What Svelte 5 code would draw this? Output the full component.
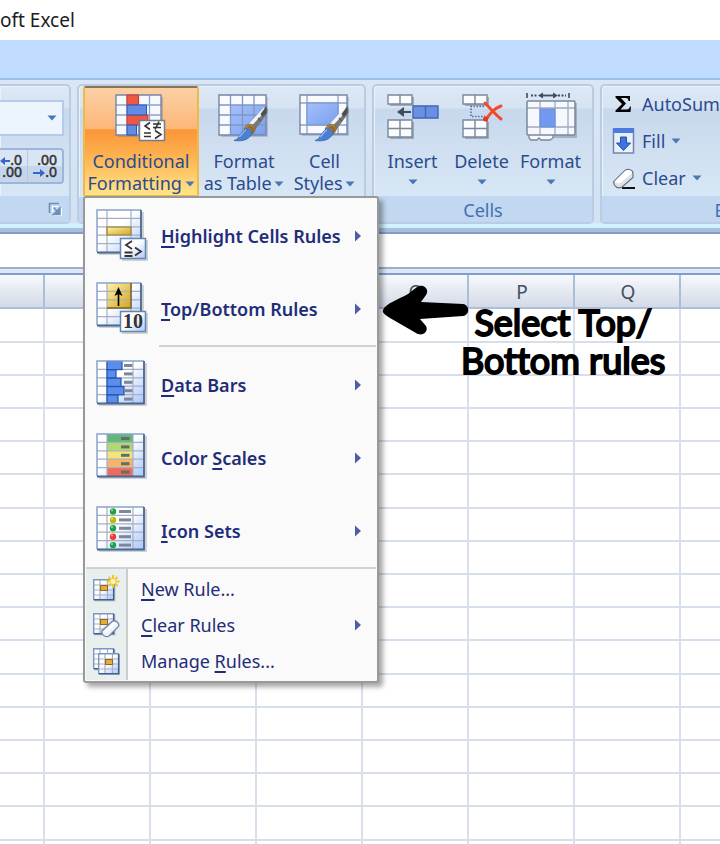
<script lang="ts">
	const columns = ['', '', '', '', 'O', 'P', 'Q', ''];
	const rows = Array.from({ length: 17 }, (_, i) => i + 1);

	const rules = [
		{ icon: 'highlight', before: '', key: 'H', after: 'ighlight Cells Rules' },
		{ icon: 'top', before: '', key: 'T', after: 'op/Bottom Rules' },
		{ icon: 'bars', before: '', key: 'D', after: 'ata Bars' },
		{ icon: 'scales', before: 'Color ', key: 'S', after: 'cales' },
		{ icon: 'sets', before: '', key: 'I', after: 'con Sets' }
	];

	const actions = [
		{ icon: 'new', before: '', key: 'N', after: 'ew Rule...', sub: false },
		{ icon: 'clear', before: '', key: 'C', after: 'lear Rules', sub: true },
		{ icon: 'manage', before: 'Manage ', key: 'R', after: 'ules...', sub: false }
	];

	const barWidths = [15, 9, 14, 17, 11];
	const scaleColors = ['#63b878', '#b0d873', '#f3e578', '#fbb26a', '#ee6a5c'];
	const dotColors = ['#1da345', '#c3b900', '#1da345', '#ee3b24', '#1da345'];

	let format = 'general';
</script>

{#snippet caret()}
	<svg class="caret" width="10" height="6" viewBox="0 0 10 6" aria-hidden="true">
		<path d="M0.5 0.5h9L5 5.5z" fill="#4a78b5" />
	</svg>
{/snippet}

{#snippet brush()}
	<path d="M48 13c2 1 2 5 1 7L37 36l-7-6z" fill="#77797c" />
	<path d="M47 15L32 31" stroke="#f3f3f3" stroke-width="3.500" />
	<path d="M48.500 12v7l-4 4-2-3z" fill="#4b4e52" />
	<path d="M40 24l3 3" stroke="#55585c" stroke-width="1.300" />
	<path d="M26 35c2-4 6-6 9-4s3 6-1 9z" fill="#b38a45" stroke="#7b5a2b" stroke-width=".8" />
	<path d="M16 46.500c6-1 6-10 13-12 4 1 6 4 4 7-4 5-10 6-17 5z" fill="#4b7fd1" stroke="#3763af" stroke-width=".8" />
	<path d="M28 34c3-1 7 2 6 6l2-2c1-4-2-7-5-6z" fill="#8f6a34" />
	<path d="M21 43c3-2 4-6 7-7" fill="none" stroke="#8db3ee" stroke-width="1.500" />
{/snippet}

{#snippet ruleIcon(name: string)}
	{@const badge = name === 'highlight' || name === 'top'}
	{@const right = badge ? 45 : 48}
	{@const split = badge ? 35 : 37}
	<svg class="rule-icon" width="54" height="54" viewBox={badge ? '0 1 54 54' : '0 -1 54 54'} aria-hidden="true">
		<rect x="3" y="4" width={right} height="43" fill="#68748a" opacity=".3" />
		<rect x="1" y="2" width={right - 1} height="42" fill="url(#cell)" />
		{#if name === 'highlight'}
			<rect x="11" y="19" width="24" height="8" fill="url(#gold)" />
		{:else if name === 'top'}
			<rect x="11" y="2" width="24" height="25" fill="url(#gold)" />
		{:else if name === 'scales'}
			{#each scaleColors as color, i}
				<rect x="11" y={2 + i * 8.4} width="26" height="8.400" fill={color} />
			{/each}
		{/if}
		<path d="M11 2v42M{split} 2v42M1 10.400h{right - 1}M1 18.800h{right - 1}M1 27.200h{right - 1}M1 35.600h{right - 1}" stroke="#a6afc2" stroke-width="1.200" fill="none" />
		{#if name === 'bars'}
			{#each barWidths as width, i}
				<rect x="11" y={2.4 + i * 8.4} {width} height="8.200" fill="#5b8eea" stroke="#2553b4" stroke-width="1.200" />
			{/each}
		{/if}
		{#if !badge}
			{#each barWidths as _, i}
				<rect x={name === 'sets' ? 23 : name === 'bars' ? 28 : 25} y={5 + i * 8.4} width={name === 'sets' ? 12 : 8.5} height="3" fill={name === 'scales' ? '#61705f' : '#7e8799'} />
			{/each}
		{/if}
		{#if name === 'sets'}
			{#each dotColors as color, i}
				<circle cx="17" cy={6.5 + i * 8.4} r="3.200" fill={color} />
				<circle cx="16" cy={5.3 + i * 8.4} r="1" fill="#fff" opacity=".6" />
			{/each}
		{/if}
		<path d="M1 44V2h{right - 1}" fill="none" stroke="#89a4cb" stroke-width="1.500" />
		<path d="M{right} 2v42.500H1" fill="none" stroke="#4a678e" stroke-width="1.800" />
		{#if name === 'highlight'}
			<path d="M11 19h24v8H11z" fill="none" stroke="#9d842c" stroke-width="1.200" />
		{:else if name === 'top'}
			<path d="M35 2v25H11" fill="none" stroke="#79641d" stroke-width="1.500" />
			<path d="M22.500 25V9" stroke="#000" stroke-width="1.600" />
			<path d="M22.500 6l4 9-4-2-4 2z" fill="#000" />
		{/if}
		{#if badge}
			<rect x="26" y="32" width="26" height="21" fill="#68748a" opacity=".3" />
			<rect x="24.500" y="30.500" width="25" height="20" fill="url(#cell)" stroke="#6587ae" stroke-width="1.500" />
			{#if name === 'highlight'}
				<path d="M36 33l-6 4 6 4M28.500 44.500h8M28.500 48h8M39 39.500l6 4-6 4" fill="none" stroke="#333" stroke-width="1.800" />
			{:else}
				<text x="37" y="47" text-anchor="middle" class="ten">10</text>
			{/if}
		{/if}
	</svg>
{/snippet}

{#snippet miniGrid(x: number, y: number)}
	<g transform="translate({x} {y})">
		<rect x="1.500" y="1.500" width="21" height="21" fill="#68748a" opacity=".3" />
		<rect x=".7" y=".7" width="20" height="20" fill="url(#cell)" />
		<path d="M7 1v20M14.500 1v20M1 6h20M1 11h20M1 16h20" stroke="#a3b0c8" stroke-width="1.200" />
		<path d="M.7 20.700V.7h20" fill="none" stroke="#7b97c0" stroke-width="1.400" />
		<path d="M20.700.7v20H.7" fill="none" stroke="#3f5f8d" stroke-width="1.500" />
		<rect x="7.500" y="6.500" width="7" height="5" fill="#e9ac32" stroke="#8a6a2d" />
	</g>
{/snippet}

{#snippet actionIcon(name: string)}
	<svg class="action-icon" width="28" height="28" viewBox="0 0 28 28" aria-hidden="true">
		{#if name === 'new'}
			{@render miniGrid(1, 4)}
			<path d="M21 0v13M14.500 6.500h13M16.500 2l9 9M25.500 2l-9 9" stroke="#f5c62f" stroke-width="2" />
			<circle cx="21" cy="6.500" r="2.500" fill="#fff7bd" />
		{:else if name === 'clear'}
			{@render miniGrid(1, 2)}
			<path d="M10 20L20 10.500c3-2 8 1 6.500 5L17 25c-3 2-8-1-7-5z" fill="#edf1fa" stroke="#7184a8" stroke-width="1.300" />
			<path d="M13 21l10-9" stroke="#fff" stroke-width="2.500" />
		{:else}
			{@render miniGrid(1, 1)}
			{@render miniGrid(6, 6)}
		{/if}
	</svg>
{/snippet}

<svg class="defs" width="0" height="0" aria-hidden="true">
	<defs>
		<linearGradient id="cell" x1="0" y1="0" x2="1" y2="1">
			<stop offset=".45" stop-color="#fff" />
			<stop offset="1" stop-color="#a9c6fb" />
		</linearGradient>
		<linearGradient id="gold" x1="0" y1="0" x2="1" y2="1">
			<stop offset="0" stop-color="#fff3a4" />
			<stop offset="1" stop-color="#d3a31f" />
		</linearGradient>
		<linearGradient id="blue" x1="0" y1="0" x2="1" y2="1">
			<stop offset="0" stop-color="#a5c1fa" />
			<stop offset="1" stop-color="#7b9ff0" />
		</linearGradient>
	</defs>
</svg>

<div class="window">
	<header class="title">oft Excel</header>
	<div class="tabs"></div>

	<div class="ribbon">
		<section class="group number">
			<div class="group-body">
				<div class="format-box">
					<select aria-label="Number format" bind:value={format}>
						<option value="general"></option>
					</select>
					{@render caret()}
				</div>
				<div class="decimals">
					<button aria-label="Increase decimal">
						<span><svg width="10" height="8" viewBox="0 0 10 8"><path d="M0 4l5-4v3h5v2H5v3z" fill="#3565c9" /></svg>.0</span>
						<span>.00</span>
					</button>
					<button aria-label="Decrease decimal">
						<span>.00</span>
						<span><svg width="12" height="8" viewBox="0 0 12 8"><path d="M12 4L7 0v3H0v2h7v3z" fill="#3565c9" /></svg>.0</span>
					</button>
				</div>
			</div>
			<footer>
				<svg class="launcher" width="14" height="14" viewBox="0 0 14 14" aria-hidden="true">
					<path d="M1.500 11V1.500H11" fill="none" stroke="#6d8fb9" stroke-width="1.600" />
					<path d="M5.500 5.500l5 5M12 6v6.500H5.500z" fill="#6d8fb9" stroke="#6d8fb9" stroke-width="1.500" />
					<path d="M4.500 10V4.500H10M13.500 6v8H6" fill="none" stroke="#fff" stroke-width="1.200" />
				</svg>
			</footer>
		</section>

		<section class="group styles">
			<div class="group-body">
				<div class="menu-anchor">
					<button class="big active" aria-haspopup="menu" aria-expanded="true">
						<svg width="52" height="50" viewBox="0 0 52 50" aria-hidden="true">
							<rect x="3" y="3" width="45" height="40" fill="#68748a" opacity=".35" />
							<rect x="1" y="1" width="45" height="40" fill="#f6f9ff" />
							<path d="M12 1v40M23.500 1v40M34.500 1v40M1 11h45M1 21h45M1 31h45" stroke="#8ea4cb" stroke-width="1.300" />
							<path d="M1 1h45v40H1z" fill="none" stroke="#7487a8" stroke-width="1.400" />
							<path d="M12 1h11.500v10H12zM12 21h21v10H12z" fill="#ef5745" stroke="#cf3a26" />
							<path d="M12 11h19.500v10H12zM12 31h9.500v10H12z" fill="#638ce6" stroke="#2857b5" />
							<rect x="24.500" y="26.500" width="25" height="20" fill="#fff" stroke="#6d7d94" stroke-width="1.500" />
							<path d="M35 28.500l-5 3.500 5 3.500M29 39h7M29 42.500h7M40 36.500l6 4-6 4M38 30h8M38 33.500h8M44 27.500l-4 8" fill="none" stroke="#333" stroke-width="1.600" />
						</svg>
						<span>Conditional</span>
						<span>Formatting {@render caret()}</span>
					</button>

					<div class="menu" role="menu">
						{#each rules as rule, i}
							{#if i === 2}
								<hr class="inset" />
							{/if}
							<button class="rule" role="menuitem">
								{@render ruleIcon(rule.icon)}
								<span class="label">{rule.before}<u>{rule.key}</u>{rule.after}</span>
								<svg class="sub" width="8" height="12" viewBox="0 0 8 12"><path d="M1 0.500v11L7 6z" fill="#4d5fa3" /></svg>
							</button>
						{/each}
						<hr />
						<div class="actions">
							{#each actions as action}
								<button class="action" role="menuitem">
									{@render actionIcon(action.icon)}
									<span class="label">{action.before}<u>{action.key}</u>{action.after}</span>
									{#if action.sub}
										<svg class="sub" width="8" height="12" viewBox="0 0 8 12"><path d="M1 0.500v11L7 6z" fill="#4d5fa3" /></svg>
									{/if}
								</button>
							{/each}
						</div>
					</div>
				</div>

				<button class="big table-style">
					<svg width="52" height="50" viewBox="0 0 52 50" aria-hidden="true">
						<rect x="3" y="3" width="47" height="40" fill="#68748a" opacity=".3" />
						<rect x="1" y="1" width="47" height="40" fill="#f8faff" />
						<rect x="12.500" y="11" width="35.500" height="30" fill="url(#blue)" />
						<path d="M12.500 1v40M24.500 1v40M36 1v40M1 11h47M1 21h47M1 31h47" stroke="#7f98c4" stroke-width="1.300" />
						<path d="M1 1h47v40H1z" fill="none" stroke="#7487a8" stroke-width="1.400" />
						{@render brush()}
					</svg>
					<span>Format</span>
					<span>as Table {@render caret()}</span>
				</button>
				<button class="big cell-style">
					<svg width="52" height="50" viewBox="0 0 52 50" aria-hidden="true">
						<rect x="3" y="3" width="47" height="39" fill="#68748a" opacity=".3" />
						<rect x="1" y="1" width="47" height="39" fill="#f8faff" />
						<path d="M8 1v39M39 1v39M1 9h47M1 31h47" stroke="#91a2bf" stroke-width="1.300" />
						<rect x="8" y="9" width="31" height="22" fill="url(#blue)" stroke="#7090d3" />
						<path d="M1 1h47v39H1z" fill="none" stroke="#7487a8" stroke-width="1.400" />
						{@render brush()}
					</svg>
					<span>Cell</span>
					<span>Styles {@render caret()}</span>
				</button>
			</div>
			<footer></footer>
		</section>

		<section class="group cells">
			<div class="group-body">
				<button class="big">
					<svg width="52" height="50" viewBox="0 0 52 50" aria-hidden="true">
						<path d="M3 3h24v9H3zM3 28h24v17H3z" fill="#68748a" opacity=".5" />
						<path d="M1 1h24v9H1zM13 1v9M1 26h24v17H1zM13 26v17M1 34.500h24" fill="#fafcff" stroke="#7c8798" stroke-width="1.400" />
						<path d="M26 12h25v12H26zM38.500 12v12" fill="#6790e6" stroke="#4267ad" stroke-width="1.400" />
						<path d="M24 18H13" stroke="#3e4d60" stroke-width="2" />
						<path d="M10 18l7-5v10z" fill="#3e4d60" />
					</svg>
					<span>Insert</span>
					{@render caret()}
				</button>
				<button class="big">
					<svg width="44" height="50" viewBox="0 0 44 50" aria-hidden="true">
						<path d="M5 3h24v9H5zM5 28h24v17H5z" fill="#68748a" opacity=".5" />
						<path d="M3 1h24v9H3zM15 1v9M3 26h24v17H3zM15 26v17M3 34.500h24" fill="#fafcff" stroke="#7c8798" stroke-width="1.400" />
						<path d="M24 12.500H11v10h14" fill="none" stroke="#4e6ba8" stroke-width="1.600" stroke-dasharray="1.500 1.500" />
						<path d="M25 9c6 6 10 11 16 16M41 12c-6 2-12 8-15 14" fill="none" stroke="#f04b2d" stroke-width="3" stroke-linecap="round" />
						<circle cx="25.500" cy="25" r="2.500" fill="#e9371c" />
					</svg>
					<span>Delete</span>
					{@render caret()}
				</button>
				<button class="big">
					<svg width="52" height="50" viewBox="0 0 52 50" aria-hidden="true">
						<path d="M2 -1v5M44 -1v5" stroke="#3e4d60" stroke-width="1.600" />
						<path d="M6 1.500h7M33 1.500h8" stroke="#3e4d60" stroke-width="2" stroke-dasharray="2 1.500" />
						<path d="M16 1.500h14" stroke="#3e4d60" stroke-width="1.800" />
						<path d="M13 1.500l5-3v6zM33 1.500l-5-3v6z" fill="#3e4d60" />
						<rect x="4" y="9" width="48" height="35" fill="#68748a" opacity=".4" />
						<path d="M4 40h24v4l-3 2H16l-2-2-2 2H6l-2-2z" fill="#f5f8ff" stroke="#7c8798" stroke-width="1.300" />
						<rect x="2" y="7" width="48" height="34" rx="1" fill="#f5f8ff" />
						<path d="M15 7v34M30 7v34M43 7v34M2 14h48M2 33h48" stroke="#a0abc0" stroke-width="1.300" />
						<rect x="15" y="15" width="15" height="18" fill="#7399ef" stroke="#6a8eda" />
						<rect x="2" y="7" width="48" height="34" rx="1" fill="none" stroke="#7c8798" stroke-width="1.500" />
					</svg>
					<span>Format</span>
					{@render caret()}
				</button>
			</div>
			<footer>Cells</footer>
		</section>

		<section class="group editing">
			<div class="group-body">
				<button class="row">
					<svg width="24" height="26" viewBox="0 0 24 26" aria-hidden="true">
						<path d="M3.500 5h14.500v5h-1.500c0-2-1-3-3-3H9l5 5.500L8.500 18.500h6c2 0 3-1 3.500-3h1l-.5 5.500h-15v-1.500l6.500-6.500-6.500-6.500z" fill="#000" />
					</svg>
					AutoSum
				</button>
				<button class="row">
					<svg width="24" height="26" viewBox="0 0 24 26" aria-hidden="true">
						<rect x="1.500" y="1" width="20" height="24" fill="#e7f0ff" stroke="#7085a9" stroke-width="1.500" />
						<rect x="1" y="0" width="21" height="5" fill="#4c7be0" />
						<path d="M8.500 9h6v6h4l-7 7.500-7-7.500h4z" fill="#3f74df" stroke="#244ea9" />
					</svg>
					Fill {@render caret()}
				</button>
				<button class="row">
					<svg width="24" height="26" viewBox="0 0 24 26" aria-hidden="true">
						<path d="M10 23h13" stroke="#111" stroke-width="2" />
						<path d="M1.500 17L13 5.500c3-2 8-1 8 3v4L10 22c-4 2-8 0-8.500-5z" fill="#dfe3e8" stroke="#667283" stroke-width="1.200" />
						<path d="M2.500 16.500L13 6c3-2 7-1 7 2L9 17.500c-3 1-5 1-6.500-1z" fill="#fff" />
					</svg>
					Clear {@render caret()}
				</button>
			</div>
			<footer>Editing</footer>
		</section>
	</div>

	<div class="formula-bar"></div>

	<main>
		<table>
			<thead>
				<tr>
					{#each columns as column}
						<th>{column}</th>
					{/each}
				</tr>
			</thead>
			<tbody>
				{#each rows as row (row)}
					<tr>
						{#each columns as _}
							<td></td>
						{/each}
					</tr>
				{/each}
			</tbody>
		</table>

		<div class="callout">
			<svg width="90" height="54" viewBox="0 0 90 54" aria-hidden="true">
				<path d="M2 26C4 20 18 15 27 10L36 3c6-4 13 2 9 8l-5 7 42 2c7 1 7 11 0 12l-43 3 6 7c3 6-4 11-10 7L9 34C4 31 1 29 2 26z" fill="#000" />
			</svg>
			<p>Select Top/<br />Bottom rules</p>
		</div>
	</main>
</div>

<style>
	:global(body) {
		margin: 0;
	}

	* {
		box-sizing: border-box;
	}

	.window {
		height: 100vh;
		display: flex;
		flex-direction: column;
		overflow: hidden;
		background: #fff;
		font-family: 'Noto Sans', 'Open Sans', sans-serif;
		font-size: 18px;
		color: #2b4b8f;
	}

	.defs {
		position: absolute;
	}

	button {
		font: inherit;
		color: inherit;
		padding: 0;
		border: 0;
		background: none;
		cursor: pointer;
	}

	.title {
		flex: none;
		height: 40px;
		line-height: 40px;
		font-size: 19px;
		color: #1c1c1c;
	}

	.tabs {
		flex: none;
		height: 40px;
		background: #bfdbff;
		border-bottom: 2px solid #9dbfeb;
	}

	.ribbon {
		flex: none;
		position: relative;
		z-index: 1;
		display: flex;
		gap: 6px;
		height: 154px;
		padding: 4px 0 10px;
		background: linear-gradient(#dbe6f4 0, #d3e1f1 143px, #d5f3ff 144px, #cdf1fd 148px, #a9bfdf 148px, #a9bfdf 152px, #7f9fca 152px);
	}

	.group {
		flex: none;
		display: flex;
		flex-direction: column;
		border: 2px solid #b8cde5;
		border-radius: 5px;
		box-shadow: inset 1px 1px #eaf2fb;
		background: linear-gradient(#dde8f5 0, #d6e3f2 22px, #c8d8ed 23px, #d8e7f5 110px);
	}

	.group-body {
		flex: 1;
		display: flex;
	}

	.group footer {
		height: 26px;
		line-height: 28px;
		background: #c1d8f0;
		text-align: center;
		color: #4470b3;
	}

	.number {
		width: 71px;
		border-left: 0;
		border-radius: 0 5px 5px 0;
	}

	.number .group-body {
		flex-direction: column;
		gap: 12px;
		padding: 14px 5px 0 0;
	}

	.format-box {
		position: relative;
	}

	.format-box select {
		display: block;
		width: 100%;
		height: 36px;
		appearance: none;
		border: 2px solid #b4cce9;
		border-left: 0;
		border-radius: 0;
		background: #ecf4fd;
	}

	.format-box .caret {
		position: absolute;
		right: 7px;
		top: 15px;
		pointer-events: none;
	}

	.decimals {
		display: flex;
		border: 2px solid #9bb6da;
		border-left: 0;
		border-radius: 0 4px 4px 0;
		background: linear-gradient(#d9e5f3 50%, #c5d6ec 50%);
	}

	.decimals button {
		height: 32px;
		display: flex;
		flex-direction: column;
		align-items: flex-end;
		justify-content: center;
		padding-right: 5px;
		font-size: 14px;
		line-height: 12px;
		color: #333;
		-webkit-text-stroke: 0.5px #333;
	}

	.decimals button:first-child {
		width: 28px;
		border-right: 1px solid #b4c8e2;
	}

	.decimals button:last-child {
		flex: 1;
	}

	.decimals span {
		white-space: nowrap;
	}

	.number footer {
		display: flex;
		align-items: center;
		justify-content: flex-end;
		padding-right: 7px;
	}

	.styles {
		width: 289px;
	}

	.styles .group-body {
		padding-left: 4px;
	}

	.menu-anchor {
		position: relative;
	}

	.big {
		display: flex;
		flex-direction: column;
		align-items: center;
		padding-top: 8px;
		line-height: 22px;
		white-space: nowrap;
	}

	.big > svg:first-child {
		margin-bottom: 6px;
		overflow: visible;
	}

	.big > .caret {
		margin-top: 7px;
	}

	.big span .caret {
		margin-left: -2px;
		vertical-align: 3px;
	}

	.big.active {
		width: 116px;
		height: 111px;
		padding-top: 6px;
		border: 2px solid #eebb4b;
		border-top-color: #8c7354;
		border-radius: 3px;
		background: linear-gradient(#fbd0a6 0, #fdb778 38%, #fb9637 39%, #fdb452 65%, #ffe58a 100%);
	}

	.table-style {
		width: 90px;
	}

	.cell-style {
		width: 71px;
	}

	.cells {
		width: 222px;
	}

	.cells .group-body {
		padding: 0 7px 0 4px;
	}

	.cells .big {
		flex: 1;
	}

	.editing {
		width: 288px;
	}

	.editing .group-body {
		flex-direction: column;
		gap: 1px;
		padding-left: 10px;
	}

	.row {
		height: 36px;
		display: flex;
		align-items: center;
		gap: 6px;
	}

	.menu {
		position: absolute;
		left: 0;
		top: 110px;
		width: 296px;
		padding: 1px;
		border: 2px solid #999;
		border-radius: 3px;
		background: #fafafa;
		box-shadow: 4px 4px 5px rgba(0, 0, 0, 0.35);
		color: #1f2d78;
	}

	.menu button {
		width: 100%;
		display: flex;
		align-items: center;
		text-align: left;
	}

	.rule {
		height: 73px;
		padding-left: 10px;
		font-weight: 600;
	}

	.rule-icon {
		margin-right: 11px;
	}

	.ten {
		font-family: 'Liberation Serif', serif;
		font-size: 20px;
		font-weight: 700;
		fill: #333;
	}

	.label {
		flex: 1;
		white-space: nowrap;
	}

	u {
		text-underline-offset: 3px;
		text-decoration-thickness: 2px;
	}

	.sub {
		margin-right: 14px;
	}

	hr {
		height: 2px;
		margin: 0;
		border: 0;
		background: #cfd1d2;
	}

	hr.inset {
		margin: 0 0 1px 73px;
	}

	.actions {
		padding: 2px 0 1px;
		background: linear-gradient(90deg, #e9efef 40px, #c9cdcd 40px, #c9cdcd 42px, #fafafa 42px);
	}

	.action {
		height: 36px;
		padding-left: 6px;
	}

	.action-icon {
		margin-right: 21px;
	}

	.formula-bar {
		flex: none;
		height: 41px;
		border-bottom: 2px solid #7f9fca;
		background: linear-gradient(#fff 33px, #9db0cb 33px, #9db0cb 35px, #dce8f6 35px);
	}

	main {
		position: relative;
	}

	table {
		width: 100%;
		table-layout: fixed;
		border-spacing: 0;
	}

	th {
		width: 106px;
		height: 34px;
		padding: 3px 0 0 2px;
		border-right: 2px solid #a9bfd8;
		border-bottom: 2px solid #adbfd6;
		background: linear-gradient(#f7f9fc, #d3dae7);
		font-weight: 400;
		font-size: 19px;
		line-height: 29px;
		color: #44515e;
	}

	th:first-child {
		width: 45px;
	}

	th:last-child {
		width: auto;
	}

	td {
		height: 33px;
		padding: 0;
		border-right: 2px solid #d9dfed;
		border-bottom: 2px solid #d6ddeb;
	}

	th:last-child,
	td:last-child {
		border-right: 0;
	}

	tr:nth-child(5n + 1) td {
		height: 34px;
	}

	.callout {
		position: absolute;
		left: 381px;
		top: 9px;
		display: flex;
		color: #000;
		pointer-events: none;
	}

	.callout svg {
		flex: none;
	}

	.callout p {
		margin: 19px 0 0 -10px;
		font-family: Lato, 'Noto Sans', sans-serif;
		font-size: 36px;
		font-variant-ligatures: none;
		line-height: 38px;
		text-align: center;
		white-space: nowrap;
		-webkit-text-stroke: 2px #000;
	}
</style>
